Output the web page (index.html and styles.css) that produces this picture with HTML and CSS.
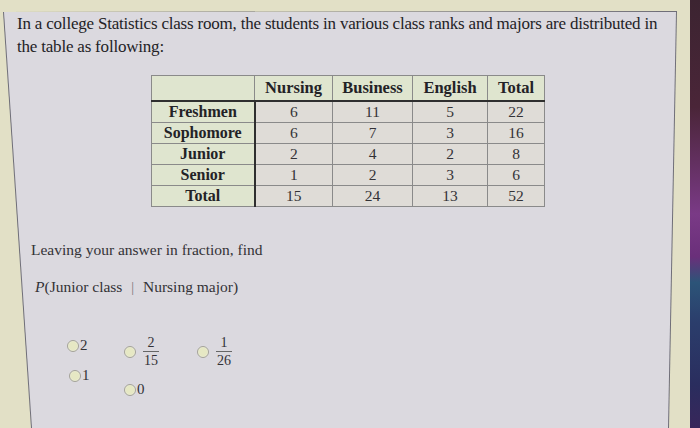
FILE: index.html
```html
<!DOCTYPE html>
<html>
<head>
<meta charset="utf-8">
<link rel="stylesheet" href="styles.css">
</head>
<body>
<div class="screen">
  <div class="main">
    <div class="frame">
      <div class="panel">
        <p class="intro">In a college Statistics class room, the students in various class ranks and majors are distributed in<br>the table as following:</p>
        <table class="data">
          <thead>
            <tr><th class="corner"></th><th>Nursing</th><th>Business</th><th>English</th><th>Total</th></tr>
          </thead>
          <tbody>
            <tr><th>Freshmen</th><td>6</td><td>11</td><td>5</td><td>22</td></tr>
            <tr><th>Sophomore</th><td>6</td><td>7</td><td>3</td><td>16</td></tr>
            <tr><th>Junior</th><td>2</td><td>4</td><td>2</td><td>8</td></tr>
            <tr><th>Senior</th><td>1</td><td>2</td><td>3</td><td>6</td></tr>
            <tr><th>Total</th><td>15</td><td>24</td><td>13</td><td>52</td></tr>
          </tbody>
        </table>
        <p class="ask">Leaving your answer in fraction, find</p>
        <p class="prob"><i>P</i>(Junior class <span class="bar">|</span> Nursing major)</p>
        <div class="options">
          <div class="col col1">
            <label class="opt"><span class="radio"></span><span>2</span></label>
            <label class="opt"><span class="radio"></span><span>1</span></label>
          </div>
          <div class="col col2">
            <label class="opt frac-opt"><span class="radio"></span><span class="frac"><span class="num">2</span><span class="den">15</span></span></label>
            <label class="opt zero"><span class="radio"></span><span>0</span></label>
          </div>
          <div class="col col3">
            <label class="opt frac-opt"><span class="radio"></span><span class="frac"><span class="num">1</span><span class="den">26</span></span></label>
          </div>
        </div>
      </div>
    </div>
  </div>
  <div class="strip"></div>
</div>
</body>
</html>
```
FILE: styles.css
```css
html, body {
  margin: 0;
  padding: 0;
}
body {
  width: 700px;
  height: 428px;
  overflow: hidden;
  background: #e2e0c6;
  font-family: "Liberation Serif", "Times New Roman", serif;
  color: #232226;
}
.screen {
  display: flex;
  height: 428px;
}
.main {
  flex: 1;
  padding: 11px 13px 0 3px;
  display: flex;
}
.frame {
  flex: 1;
  background: #6f6e78;
  padding: 1px 1px 0 1px;
  display: flex;
  clip-path: polygon(0 1px, 100% 0, calc(100% - 8px) 100%, 28px 100%);
}
.panel {
  flex: 1;
  background: #dbd9df;
  clip-path: polygon(0 0, 100% 0, calc(100% - 8px) 100%, 28px 100%);
}
.strip {
  width: 10px;
  background: linear-gradient(180deg, #3c2431 0%, #4a2538 25%, #7a3a86 50%, #6a2f7a 60%, #2c5478 66%, #2b3e6c 75%, #2a2d5e 90%, #38265a 100%);
}
.intro {
  margin: 0;
  padding: 0 0 0 13px;
  font-size: 17px;
  line-height: 23px;
  letter-spacing: -0.2px;
  white-space: nowrap;
}
.data {
  margin: 17px 0 0 147px;
  border-collapse: collapse;
  font-size: 15.5px;
  border: 1px solid #8a8a8a;
}
.data th, .data td {
  border: 1px solid #8a8a8a;
  padding: 0;
  height: 20px;
  text-align: center;
  line-height: 20px;
}
.data thead th {
  background: #dfe5cf;
  font-weight: bold;
  font-size: 16.5px;
  height: 24px;
  border-bottom: 2px solid #2f2f2f;
}
.data thead th:nth-child(2) { width: 77px; }
.data thead th:nth-child(3) { width: 79px; }
.data thead th:nth-child(4) { width: 74px; }
.data thead th:nth-child(5) { width: 56px; }
.data .corner {
  width: 102px;
}
.data tbody th {
  background: #dfe5cf;
  font-weight: bold;
  font-size: 16px;
  border-right: 2px solid #2f2f2f;
}
.data td {
  background: #dfdcd7;
  color: #333236;
}
.ask {
  margin: 34px 0 0 27px;
  font-size: 15.5px;
  color: #333236;
}
.prob {
  margin: 19px 0 0 31px;
  font-size: 15.5px;
  color: #333236;
}
.bar {
  color: #777;
  font-size: 14px;
  padding: 0 5px;
}
.options {
  display: flex;
  margin: 30px 0 0 63px;
  font-size: 15px;
  color: #333236;
}
.col {
  display: flex;
  flex-direction: column;
}
.col1 { width: 57px; gap: 13px; padding-top: 11px; }
.col2 { width: 73px; padding-top: 9px; }
.col3 { padding-top: 9px; }
.opt {
  display: flex;
  align-items: center;
  gap: 1px;
}
.radio {
  width: 10px;
  height: 10px;
  border-radius: 50%;
  background: #e6e8c4;
  border: 1px solid #a3a29a;
  box-shadow: inset 0 0 1px #fff;
}
.col1 .opt:nth-child(2) { margin-left: 2px; }
.frac-opt { gap: 8px; }
.frac {
  display: flex;
  flex-direction: column;
  align-items: center;
  font-size: 14px;
  line-height: 15px;
}
.num {
  padding: 0 1px 1px;
  border-bottom: 1px solid #666;
  width: 100%;
  text-align: center;
}
.den { padding-top: 1px; }
.zero { margin: 13px 0 0 0; }
```
